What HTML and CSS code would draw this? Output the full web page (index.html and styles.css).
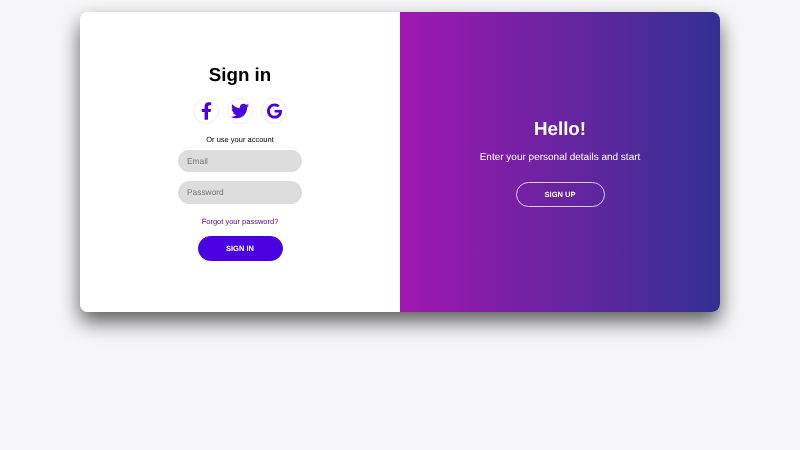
FILE: index.html
```html
<!DOCTYPE html>
<html>
  <head>
    <link rel="stylesheet" href="styles.css">
  </head>
  <body>
    <div class="container">
      <form class="panel sign-in">
        <h1>Sign in</h1>
        <div class="social">
          <a class="social-link" href="#">
            <svg class="icon-f" viewBox="0 0 320 512"><path d="M279.14 288l14.22-92.66h-88.91v-60.13c0-25.35 12.42-50.06 52.24-50.06h40.42V6.26S260.43 0 225.36 0c-73.22 0-121.08 44.38-121.08 124.72v70.62H22.89V288h81.39v224h100.17V288z"/></svg>
          </a>
          <a class="social-link" href="#">
            <svg class="icon-t" viewBox="0 0 512 512"><path d="M459.37 151.716c.325 4.548.325 9.097.325 13.645 0 138.72-105.583 298.558-298.558 298.558-59.452 0-114.68-17.219-161.137-47.106 8.447.974 16.568 1.299 25.34 1.299 49.055 0 94.213-16.568 130.274-44.832-46.132-.975-84.792-31.188-98.112-72.772 6.498.974 12.995 1.624 19.818 1.624 9.421 0 18.843-1.3 27.614-3.573-48.081-9.747-84.143-51.98-84.143-102.985v-1.299c13.969 7.797 30.214 12.67 47.431 13.319-28.264-18.843-46.781-51.005-46.781-87.391 0-19.492 5.197-37.36 14.294-52.954 51.655 63.675 129.3 105.258 216.365 109.807-1.624-7.797-2.599-15.918-2.599-24.04 0-57.828 46.782-104.934 104.934-104.934 30.213 0 57.502 12.67 76.67 33.137 23.715-4.548 46.456-13.32 66.599-25.34-7.798 24.366-24.366 44.833-46.132 57.827 21.117-2.273 41.584-8.122 60.426-16.243-14.292 20.791-32.161 39.308-52.628 54.253z"/></svg>
          </a>
          <a class="social-link" href="#">
            <svg class="icon-g" viewBox="0 0 488 512"><path d="M488 261.8C488 403.3 391.1 504 248 504 110.8 504 0 393.2 0 256S110.8 8 248 8c66.8 0 123 24.5 166.3 64.9l-67.5 64.9C258.5 52.6 94.3 116.6 94.3 256c0 86.5 69.1 156.8 153.7 156.8 98.2 0 135-70.4 140.8-106.9H248v-85.3h236.1c2.3 12.7 3.9 24.9 3.9 41.4z"/></svg>
          </a>
        </div>
        <span class="hint">Or use your account</span>
        <input class="field" type="email" placeholder="Email">
        <input class="field" type="password" placeholder="Password">
        <a class="forgot" href="#">Forgot your password?</a>
        <button class="btn btn-primary" type="button">SIGN IN</button>
      </form>
      <div class="panel overlay">
        <h2>Hello!</h2>
        <p>Enter your personal details and start</p>
        <button class="btn btn-ghost" type="button">SIGN UP</button>
      </div>
    </div>
  </body>
</html>
```

FILE: styles.css
```css
* {
  box-sizing: border-box;
}
body {
  font-family: "Liberation Sans", Arial, sans-serif;
  text-rendering: geometricPrecision;
  margin: 0;
  height: 450px;
  overflow: hidden;
  background: #f6f5f7;
}
.container {
  display: flex;
  width: 640px;
  height: 300px;
  margin: 12px auto 0;
  border-radius: 8px;
  background: #fff;
  box-shadow: 0 10px 20px rgba(0, 0, 0, 0.62);
}
.panel {
  flex: 1;
  display: flex;
  flex-direction: column;
  align-items: center;
  filter: blur(0.3px);
}
.sign-in {
  padding-top: 51px;
  border-radius: 8px 0 0 8px;
  background: #fff;
}
h1 {
  margin: 0;
  font-size: 18.75px;
  line-height: 24px;
  font-weight: bold;
  color: #000;
}
.social {
  display: flex;
  gap: 8.5px;
  margin-top: 11px;
}
.social-link {
  display: flex;
  align-items: center;
  justify-content: center;
  width: 25.5px;
  height: 25.5px;
  border: 1px solid #eeeef2;
  border-radius: 50%;
}
.social-link svg {
  fill: #4a00e0;
}
.icon-f {
  width: 11px;
  height: 18px;
}
.icon-t {
  width: 18px;
  height: 18px;
}
.icon-g {
  width: 15px;
  height: 16px;
}
.hint {
  margin-top: 11.5px;
  font-size: 7.5px;
  line-height: 10px;
  color: #000;
}
.field {
  width: 124px;
  height: 22.5px;
  margin-top: 9px;
  padding: 0 9px;
  border: none;
  border-radius: 12px;
  background: #ddd;
  font-family: inherit;
  font-size: 8.4px;
  text-rendering: geometricPrecision;
}
.hint + .field {
  margin-top: 4.5px;
}
.field::placeholder {
  color: #757575;
}
.forgot {
  margin-top: 13px;
  font-size: 7.5px;
  line-height: 10px;
  color: #4a00a0;
  text-decoration: none;
}
.btn {
  width: 85px;
  height: 25px;
  border-radius: 13px;
  font-family: inherit;
  font-size: 7.5px;
  font-weight: bold;
  text-rendering: geometricPrecision;
}
.btn-primary {
  margin-top: 9px;
  border: 1px solid #4a00e0;
  background: #4a00e0;
  color: #fff;
}
.overlay {
  padding-top: 105px;
  border-radius: 0 8px 8px 0;
  background: linear-gradient(to right, #a017b0, #333092);
  color: #fff;
}
h2 {
  margin: 0;
  font-size: 18.75px;
  line-height: 23px;
  font-weight: bold;
}
.overlay p {
  margin: 11px 0 0;
  font-size: 10px;
  line-height: 13px;
}
.btn-ghost {
  width: 89px;
  margin-top: 18px;
  border: 1px solid rgba(255, 255, 255, 0.75);
  background: transparent;
  color: #fff;
}
```
